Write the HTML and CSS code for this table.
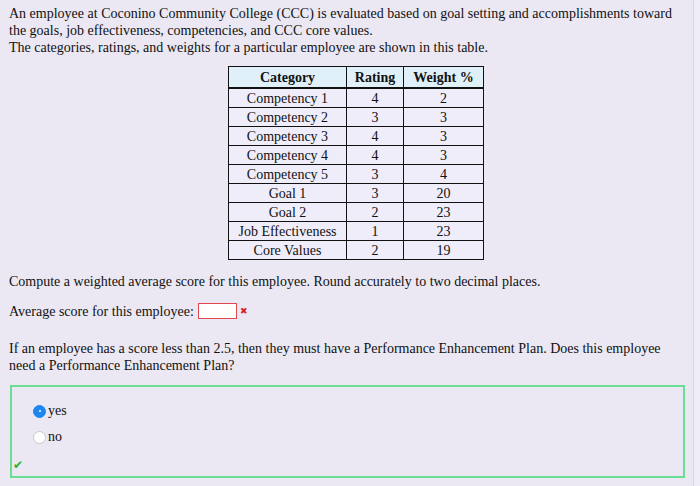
FILE: index.html
```html
<!DOCTYPE html>
<html>
<head>
<meta charset="utf-8">
<link rel="stylesheet" href="styles.css">
</head>
<body>
<div class="page">
  <p class="intro">An employee at Coconino Community College (CCC) is evaluated based on goal setting and accomplishments toward the goals, job effectiveness, competencies, and CCC core values.<br>The categories, ratings, and weights for a particular employee are shown in this table.</p>
  <table class="data">
    <thead>
      <tr><th class="c1">Category</th><th class="c2">Rating</th><th class="c3">Weight %</th></tr>
    </thead>
    <tbody>
      <tr><td>Competency 1</td><td>4</td><td>2</td></tr>
      <tr><td>Competency 2</td><td>3</td><td>3</td></tr>
      <tr><td>Competency 3</td><td>4</td><td>3</td></tr>
      <tr><td>Competency 4</td><td>4</td><td>3</td></tr>
      <tr><td>Competency 5</td><td>3</td><td>4</td></tr>
      <tr><td>Goal 1</td><td>3</td><td>20</td></tr>
      <tr><td>Goal 2</td><td>2</td><td>23</td></tr>
      <tr><td>Job Effectiveness</td><td>1</td><td>23</td></tr>
      <tr><td>Core Values</td><td>2</td><td>19</td></tr>
    </tbody>
  </table>
  <p class="q">Compute a weighted average score for this employee. Round accurately to two decimal places.</p>
  <p class="q">Average score for this employee: <span class="answer"></span><span class="wrong">✖</span></p>
  <p class="q2">If an employee has a score less than 2.5, then they must have a Performance Enhancement Plan. Does this employee need a Performance Enhancement Plan?</p>
  <div class="choices">
    <label class="choice"><span class="radio on"></span>yes</label>
    <label class="choice"><span class="radio"></span>no</label>
    <span class="ok">✔</span>
  </div>
</div>
</body>
</html>
```
FILE: styles.css
```css
html, body {
  margin: 0;
  padding: 0;
  background: #efedf7;
}
body {
  font-family: "Liberation Serif", "Times New Roman", serif;
  font-size: 14px;
  color: #111;
}
.page {
  width: 694px;
  height: 486px;
  background: #ebe8f3;
  border-right: 1px solid #d9d5e6;
  padding: 5px 0 0 9px;
  box-sizing: border-box;
  position: relative;
}
.intro {
  margin: 0;
  line-height: 17px;
  width: 670px;
}
.data {
  border-collapse: collapse;
  margin: 10px 0 0 219px;
  font-size: 14px;
  line-height: 17px;
}
.data th, .data td {
  border: 1px solid #111;
  text-align: center;
  padding: 1px 0 0;
  height: 19px;
  box-sizing: border-box;
}
.data th {
  background: #dff0f9;
  font-weight: bold;
  border-bottom: 2px solid #111;
  padding: 2px 0 1px;
  height: 21px;
}
.data td {
  background: #efedfa;
}
.c1 { width: 118px; }
.c2 { width: 57px; }
.c3 { width: 80px; }
.q {
  margin: 13px 0 0;
  line-height: 17px;
}
.q + .q { margin-top: 13px; }
.answer {
  display: inline-block;
  width: 37px;
  height: 14px;
  background: #fff;
  border: 1px solid #e0464b;
  vertical-align: -3px;
  margin-left: 1px;
}
.wrong {
  color: #d9202a;
  font-size: 9px;
  margin-left: 3px;
  vertical-align: 2px;
}
.q2 {
  margin: 20px 0 0;
  line-height: 17px;
  font-size: 14px;
  width: 670px;
}
.choices {
  margin: 11px 0 0 1px;
  width: 675px;
  height: 93px;
  border: 2px solid #6ade93;
  padding: 15px 0 0 21px;
  box-sizing: border-box;
  position: relative;
}
.choice {
  display: flex;
  align-items: center;
  height: 18px;
  margin-bottom: 8px;
  font-size: 14px;
}
.radio {
  width: 13px;
  height: 13px;
  border-radius: 50%;
  border: 1px solid #c8c8cc;
  background: #fff;
  box-sizing: border-box;
  margin-right: 2px;
  position: relative;
}
.radio.on {
  background: #1e86f0;
  border-color: #1e86f0;
}
.radio.on::after {
  content: "";
  position: absolute;
  left: 4.5px;
  top: 4.5px;
  width: 2px;
  height: 2px;
  border-radius: 50%;
  background: #fff;
}
.ok {
  position: absolute;
  left: 1px;
  bottom: 4px;
  color: #2bb52b;
  font-size: 12px;
  font-family: "DejaVu Sans", sans-serif;
}
```
